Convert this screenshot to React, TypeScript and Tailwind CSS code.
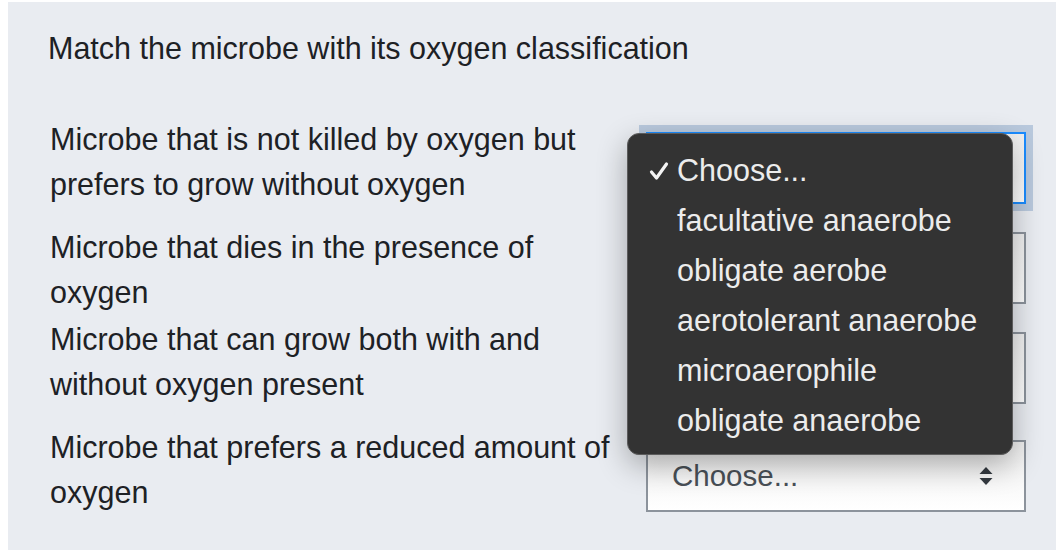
import React from 'react';

const rows = [
  { label: 'Microbe that is not killed by oxygen but prefers to grow without oxygen', h: 'h-[100px]', lt: 'mt-0', focused: true },
  { label: 'Microbe that dies in the presence of oxygen', h: 'h-[100px]', lt: 'mt-[8px]', focused: false },
  { label: 'Microbe that can grow both with and without oxygen present', h: 'h-[108px]', lt: 'mt-0', focused: false },
  { label: 'Microbe that prefers a reduced amount of oxygen', h: 'h-[100px]', lt: 'mt-0', focused: false },
];

const options = ['Choose...', 'facultative anaerobe', 'obligate aerobe', 'aerotolerant anaerobe', 'microaerophile', 'obligate anaerobe'];

const Arrows = () => (
  <svg width="14" height="20" viewBox="0 0 14 20" className="shrink-0">
    <path d="M7 1 L13.5 8 H0.5 Z" fill="#343a40" />
    <path d="M7 19 L13.5 12 H0.5 Z" fill="#343a40" />
  </svg>
);

const Select = ({ focused }: { focused: boolean }) => (
  <div
    className={
      focused
        ? 'mt-[15px] ml-[24px] w-[380px] h-[72px] border-2 border-[#1a8cff] shadow-[0_0_0_7px_#b9c9dd] bg-gradient-to-b from-[#efefef] to-white flex items-center justify-between pl-[24px] pr-[31px]'
        : 'mt-[15px] ml-[24px] w-[380px] h-[72px] border-2 border-[#8c939c] bg-gradient-to-b from-[#efefef] to-white flex items-center justify-between pl-[24px] pr-[31px]'
    }
  >
    <span className="text-[#495057] text-[29.5px]">Choose...</span>
    <Arrows />
  </div>
);

export default function App() {
  return (
    <div className="relative w-[1056px] h-[550px] overflow-hidden bg-white pt-[2px] pl-[8px] font-['Liberation_Sans',Arial,sans-serif]">
      <div className="h-[600px] bg-[#e9ecf1] pl-[40px] pt-[24px]">
        <h1 className="text-[30.5px] leading-[45px] text-[#1d2125]">Match the microbe with its oxygen classification</h1>

        <div className="mt-[46px]">
          {rows.map((r, i) => (
            <div key={i} className={`flex items-start ${r.h}`}>
              <div className={`w-[574px] pl-[2px] text-[30.5px] leading-[45px] text-[#1d2125] ${r.lt}`}>{r.label}</div>
              <Select focused={r.focused} />
            </div>
          ))}
        </div>
      </div>

      {/* native select popup */}
      <div className="absolute left-[627px] top-[133px] w-[386px] h-[322px] rounded-[12px] bg-[#333333] border border-[#5c5c5c] shadow-[0_10px_30px_rgba(0,0,0,0.3)] pt-[12px]">
        {options.map((o, i) => (
          <div key={o} className="h-[50px] flex items-center text-[30.5px] text-[#ececec]">
            <span className="w-[49px] flex justify-end pr-[8px]">
              {i === 0 && (
                <svg width="20" height="20" viewBox="0 0 20 20">
                  <path d="M2.5 11 L7.5 17 L17.5 3" fill="none" stroke="#f4f4f4" strokeWidth="3.2" strokeLinecap="round" strokeLinejoin="round" />
                </svg>
              )}
            </span>
            <span>{o}</span>
          </div>
        ))}
      </div>
    </div>
  );
}
